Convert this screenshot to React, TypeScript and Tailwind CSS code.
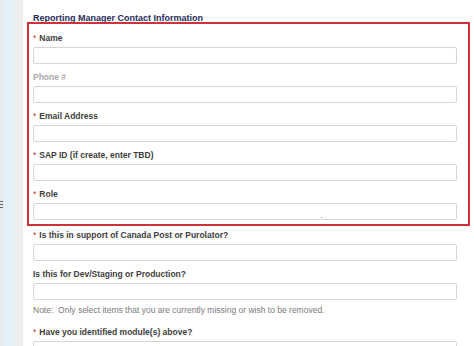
import React from "react";

type Field = { label: string; required?: boolean; muted?: boolean };

const managerFields: Field[] = [
  { label: "Name", required: true },
  { label: "Phone #", muted: true },
  { label: "Email Address", required: true },
  { label: "SAP ID (if create, enter TBD)", required: true },
  { label: "Role", required: true },
];

function FormField({ label, required, muted }: Field) {
  return (
    <div className="flex flex-col">
      <div
        className={
          "h-[12px] leading-[12px] text-[8.5px] font-bold whitespace-nowrap " +
          (muted ? "text-[#a8a8a8]" : "text-[#3e3e3c]")
        }
      >
        {required && <span className="text-[#c23934] font-normal mr-[3px]">*</span>}
        {label}
      </div>
      <div className="mt-[3px] h-[17px] w-[424px] rounded-[2px] border border-[#d4d6d9] bg-white" />
    </div>
  );
}

export default function App() {
  return (
    <div
      className="flex w-[474px] h-[346px] overflow-hidden bg-white"
      style={{ fontFamily: '"Liberation Sans", Arial, sans-serif' }}
    >
      {/* left page gutter */}
      <div className="relative flex w-[23px] shrink-0">
        <div className="w-[4px] bg-[#e8eaed]" />
        <div className="w-[9px] bg-[#e1f1f6]" />
        <div className="w-[10px] bg-[#eceef0]" />
        <div className="absolute left-0 top-[201px] flex flex-col gap-[2px]">
          <div className="h-px w-[3px] bg-[#666]" />
          <div className="h-px w-[3px] bg-[#666]" />
          <div className="h-px w-[3px] bg-[#666]" />
        </div>
      </div>

      <div className="flex flex-col flex-1">
        <div className="h-[5px] w-[434px] bg-[#eef0f2]" />
        <div className="flex flex-col pl-[10px] pt-[12px]">
          <h3 className="h-[12px] leading-[12px] text-[9px] font-bold text-[#1d2b5b] whitespace-nowrap">
            Reporting Manager Contact Information
          </h3>

          <div className="relative mt-[8px] flex flex-col gap-[7px]">
            {managerFields.map((f) => (
              <FormField key={f.label} {...f} />
            ))}
            <div className="absolute left-[288px] bottom-[2px] h-px w-px bg-[#999]" />
            <div className="pointer-events-none absolute -top-[10px] -left-[6px] w-[443px] -bottom-[6px] border-2 border-[#d3313a]" />
          </div>

          <div className="mt-[9px] flex flex-col gap-[7px]">
            <FormField label="Is this in support of Canada Post or Purolator?" required />
            <FormField label="Is this for Dev/Staging or Production?" />
          </div>

          <p className="mt-[4px] h-[12px] leading-[12px] text-[8.5px] text-[#7a7a7a] whitespace-pre">
            {"Note:  Only select items that you are currently missing or wish to be removed."}
          </p>

          <div className="mt-[10px]">
            <FormField label="Have you identified module(s) above?" required />
          </div>
        </div>
      </div>
    </div>
  );
}
